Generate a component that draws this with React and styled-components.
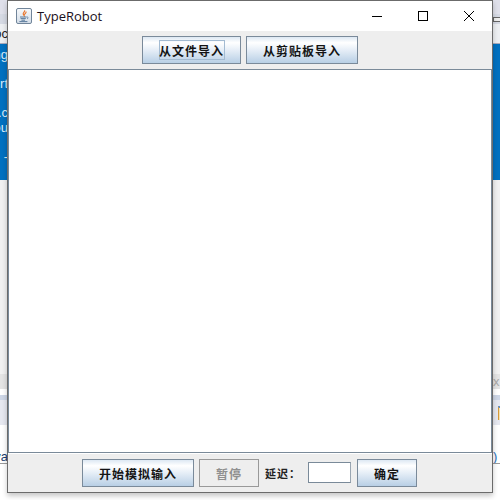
import React from "react";
import styled, { createGlobalStyle } from "styled-components";

const Global = createGlobalStyle`
  html, body { margin: 0; padding: 0; width: 500px; height: 500px; overflow: hidden; background: #fff; }
  * { box-sizing: border-box; }
`;

const Desktop = styled.div`
  position: relative;
  width: 500px;
  height: 500px;
  overflow: hidden;
  display: flex;
  flex-direction: column;
  background: #fff;
  font-family: "Liberation Sans", sans-serif;
`;

const Strip = styled.div`
  height: ${(p) => p.$h}px;
  flex: none;
  background: ${(p) => p.$bg};
  border-bottom: ${(p) => (p.$line ? `1px solid ${p.$line}` : "none")};
  display: flex;
  align-items: center;
  overflow: hidden;
`;

const BluePanel = styled.div`
  height: 136px;
  flex: none;
  background: #0070c0;
  padding-top: 4px;
  display: flex;
  flex-direction: column;
`;

const BlueLine = styled.div`
  height: 14.5px;
  width: 8px;
  display: flex;
  justify-content: flex-end;
  color: #d9ecfa;
  font-size: 13px;
  line-height: 14.5px;
  white-space: pre;
`;

const EdgeText = styled.div`
  width: 8px;
  flex: none;
  display: flex;
  justify-content: flex-end;
  color: ${(p) => p.$c || "#333"};
  font-size: 13px;
  white-space: pre;
`;

const RightMark = styled.div`
  margin-left: auto;
  width: 7px;
  flex: none;
  display: flex;
  color: ${(p) => p.$c || "#888"};
  font-size: 13px;
`;

const SmallBox = styled.div`
  width: 10px;
  height: 5px;
  flex: none;
  border: 1px solid #666;
  background: #eee;
`;

const FileMark = styled.div`
  width: 10px;
  height: 14px;
  flex: none;
  margin-left: 5px;
  background: #f4e2b0;
  border-top: 2px solid #5a8fd0;
  border-left: 1px solid #d69a3a;
`;

const Window = styled.div`
  position: absolute;
  left: 7px;
  top: 0;
  width: 486px;
  height: 493px;
  display: flex;
  flex-direction: column;
  background: #eeeeee;
  border: 1px solid #6b6b6b;
  border-left-width: 1.5px;
  box-shadow: 0 3px 5px rgba(0, 0, 0, 0.22);
`;

const TitleBar = styled.div`
  height: 30px;
  flex: none;
  background: #fff;
  display: flex;
  align-items: center;
  padding-left: 8px;
`;

const AppIcon = styled.svg`
  width: 16px;
  height: 16px;
  flex: none;
`;

const Title = styled.span`
  margin-left: 5px;
  font: 13px "Open Sans", "Liberation Sans", sans-serif;
  color: #1a1020;
  flex: 1;
`;

const Controls = styled.div`
  display: flex;
  height: 100%;
`;

const ControlButton = styled.div`
  width: 46px;
  height: 30px;
  display: flex;
  align-items: center;
  justify-content: center;
`;

const TopBar = styled.div`
  height: 39px;
  flex: none;
  display: flex;
  justify-content: center;
  align-items: flex-start;
  gap: 5px;
  padding-top: 5px;
  border-bottom: 1px solid #7a8a99;
`;

const JButton = styled.button`
  width: ${(p) => p.$w}px;
  height: 28px;
  padding: 0;
  flex: none;
  display: flex;
  align-items: center;
  justify-content: center;
  white-space: nowrap;
  border: 1px solid #7a8a9a;
  border-radius: 0;
  background: linear-gradient(to bottom, #dde8f3 0%, #ffffff 22%, #e6eef7 50%, #b8cfe5 100%);
  font: 700 12px "Noto Sans CJK SC", "Liberation Sans", sans-serif;
  letter-spacing: 1px;
  color: #141414;
  &:disabled {
    background: #eeeeee;
    border-color: #999;
    color: #8f8f8f;
  }
`;

const FocusBox = styled.span`
  display: flex;
  align-items: center;
  justify-content: center;
  height: 20px;
  width: 66px;
  white-space: nowrap;
  border: 1px solid #a3bbd2;
`;

const TextPane = styled.div`
  flex: 1;
  background: #fff;
  border-left: 1.5px solid #7a8a99;
  border-right: 1.5px solid #7a8a99;
  border-bottom: 1px solid #7a8a99;
`;

const BottomBar = styled.div`
  height: 39px;
  flex: none;
  display: flex;
  justify-content: center;
  align-items: flex-start;
  padding-top: 5px;
  padding-right: 1px;
  border-top: 1px solid #fff;
`;

const PauseButton = styled(JButton)`
  margin-left: 5px;
`;

const DelayLabel = styled.span`
  margin-left: 6px;
  width: 43px;
  height: 28px;
  display: flex;
  align-items: center;
  font: 700 11px "Noto Sans CJK SC", "Liberation Sans", sans-serif;
  letter-spacing: 1px;
  color: #222;
`;

const DelayInput = styled.input`
  width: 43px;
  height: 21px;
  margin-top: 3px;
  padding: 0;
  background: #fff;
  border: 1px solid #7a8a99;
  border-right-color: #9aa6b2;
  border-radius: 0;
  outline: none;
`;

const ConfirmButton = styled(JButton)`
  margin-left: 6px;
`;

const JavaIcon = () => (
  <AppIcon viewBox="0 0 16 16">
    <defs>
      <linearGradient id="tile" x1="0" y1="0" x2="0" y2="1">
        <stop offset="0" stopColor="#f7f9fb" />
        <stop offset="1" stopColor="#d3dde8" />
      </linearGradient>
    </defs>
    <rect x="0.5" y="0.5" width="15" height="15" rx="1.5" fill="url(#tile)" stroke="#71859a" />
    <path d="M8.6 2.2c.8 1.3-1.9 2.4-1.4 4 .2.6.6 1 .9 1.3-.2-.8.2-1.2 1.2-2 .7-.6 1-1.3.6-2" fill="none" stroke="#e8742a" strokeWidth="1.1" />
    <path d="M4 9h6.6M4.6 10.6h5.2M5.4 12.2h3.6M3.4 13.6h8" fill="none" stroke="#4d6f94" strokeWidth="0.9" />
    <path d="M10.8 9.1c1.5-.3 1.9 1.1.2 1.7" fill="none" stroke="#4d6f94" strokeWidth="0.8" />
  </AppIcon>
);

const blueLines = ["ng", " ", "rt", " ", ".c", "ou", " ", "-"];

export default function App() {
  return (
    <>
      <Global />
      <Desktop>
        <Strip $h={14} $bg="#dfe0ea" />
        <Strip $h={10} $bg="#d5d9e3">
          <RightMark><SmallBox /></RightMark>
        </Strip>
        <Strip $h={20} $bg="#edeff2" $line="#aab">
          <EdgeText $c="#222">oc</EdgeText>
        </Strip>
        <BluePanel>
          {blueLines.map((t, i) => (
            <BlueLine key={i}>{t}</BlueLine>
          ))}
        </BluePanel>
        <Strip $h={194} $bg="#f1f1f1" />
        <Strip $h={15} $bg="#e4e4e4">
          <RightMark $c="#aaa">x</RightMark>
        </Strip>
        <Strip $h={6} $bg="#ffffff" />
        <Strip $h={5} $bg="#cdd6e6" />
        <Strip $h={25} $bg="#e6e8f0">
          <RightMark><FileMark /></RightMark>
        </Strip>
        <Strip $h={24} $bg="#ffffff" />
        <Strip $h={15} $bg="#ffffff" $line="#9a9a9a">
          <EdgeText $c="#1c3f70">va</EdgeText>
          <RightMark $c="#2a6fb8">)</RightMark>
        </Strip>
        <Strip $h={36} $bg="#ffffff" />
        <Window>
          <TitleBar>
            <JavaIcon />
            <Title>TypeRobot</Title>
            <Controls>
              <ControlButton>
                <svg width="12" height="12" viewBox="0 0 12 12">
                  <path d="M1 6.5h10" stroke="#000" strokeWidth="1" />
                </svg>
              </ControlButton>
              <ControlButton>
                <svg width="12" height="12" viewBox="0 0 12 12">
                  <rect x="1.5" y="1.5" width="9" height="9" fill="none" stroke="#000" />
                </svg>
              </ControlButton>
              <ControlButton>
                <svg width="12" height="12" viewBox="0 0 12 12">
                  <path d="M1 1l10 10M11 1L1 11" stroke="#000" strokeWidth="1" />
                </svg>
              </ControlButton>
            </Controls>
          </TitleBar>
          <TopBar>
            <JButton $w={99}>
              <FocusBox>从文件导入</FocusBox>
            </JButton>
            <JButton $w={112}>从剪贴板导入</JButton>
          </TopBar>
          <TextPane />
          <BottomBar>
            <JButton $w={112}>开始模拟输入</JButton>
            <PauseButton $w={60} disabled>暂停</PauseButton>
            <DelayLabel>延迟：</DelayLabel>
            <DelayInput />
            <ConfirmButton $w={60}>确定</ConfirmButton>
          </BottomBar>
        </Window>
      </Desktop>
    </>
  );
}
